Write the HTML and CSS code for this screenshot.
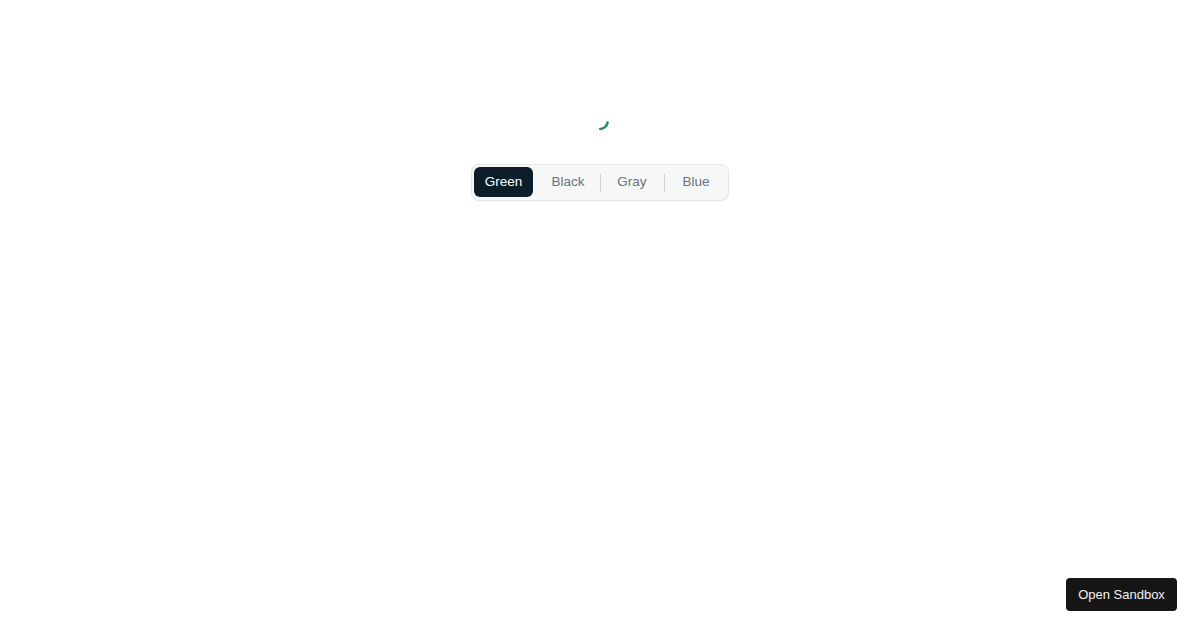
FILE: index.html
```html
<!DOCTYPE html>
<html>
<head>
<meta charset="utf-8">
<link rel="stylesheet" href="styles.css">
</head>
<body>
<main class="stage">
  <div class="spinner-wrap">
    <svg class="spinner" width="20" height="20" viewBox="0 0 20 20">
      <path d="M17.6 11.6 A8 8 0 0 1 10.2 18" fill="none" stroke="#2f8a72" stroke-width="2.6" stroke-linecap="round"/>
    </svg>
  </div>
  <div class="segmented">
    <button class="seg active">Green</button>
    <button class="seg">Black</button>
    <span class="sep"></span>
    <button class="seg">Gray</button>
    <span class="sep"></span>
    <button class="seg">Blue</button>
  </div>
</main>
<button class="sandbox">Open Sandbox</button>
</body>
</html>
```
FILE: styles.css
```css
* { box-sizing: border-box; }
html, body { margin: 0; padding: 0; background: #ffffff; }
body {
  width: 1200px;
  height: 630px;
  font-family: "Liberation Sans", Arial, sans-serif;
  position: relative;
  overflow: hidden;
}
.stage {
  display: flex;
  flex-direction: column;
  align-items: center;
  padding-top: 111px;
}
.spinner-wrap {
  width: 20px;
  height: 20px;
}
.spinner { display: block; }
.segmented {
  margin-top: 33px;
  display: flex;
  align-items: center;
  width: 258px;
  height: 37px;
  border: 1px solid #e3e7e8;
  border-radius: 8px;
  background: #f6f8f8;
  box-shadow: 0 1px 1px rgba(0,0,0,0.03);
}
.seg {
  flex: 0 0 64px;
  height: 35px;
  border: 0;
  background: transparent;
  font-family: inherit;
  font-size: 13.5px;
  color: #66737b;
  padding: 0 0 2px 0;
  cursor: pointer;
}
.seg.active {
  flex: 0 0 59px;
  align-self: flex-start;
  height: 30px;
  margin: 2px 3px 0 2px;
  padding: 0 0 1px 0;
  background: #0b1e29;
  color: #ffffff;
  border-radius: 6px;
}
.sep {
  flex: 0 0 1px;
  width: 1px;
  height: 18px;
  background: #cdd3d6;
  margin: 0 -0.5px;
}
.sandbox {
  position: absolute;
  right: 23px;
  bottom: 19px;
  width: 111px;
  height: 33px;
  border: 0;
  border-radius: 4px;
  background: #151515;
  color: #f2f2f2;
  font-family: inherit;
  font-size: 13px;
  padding: 0 0 1px 0;
}
```
